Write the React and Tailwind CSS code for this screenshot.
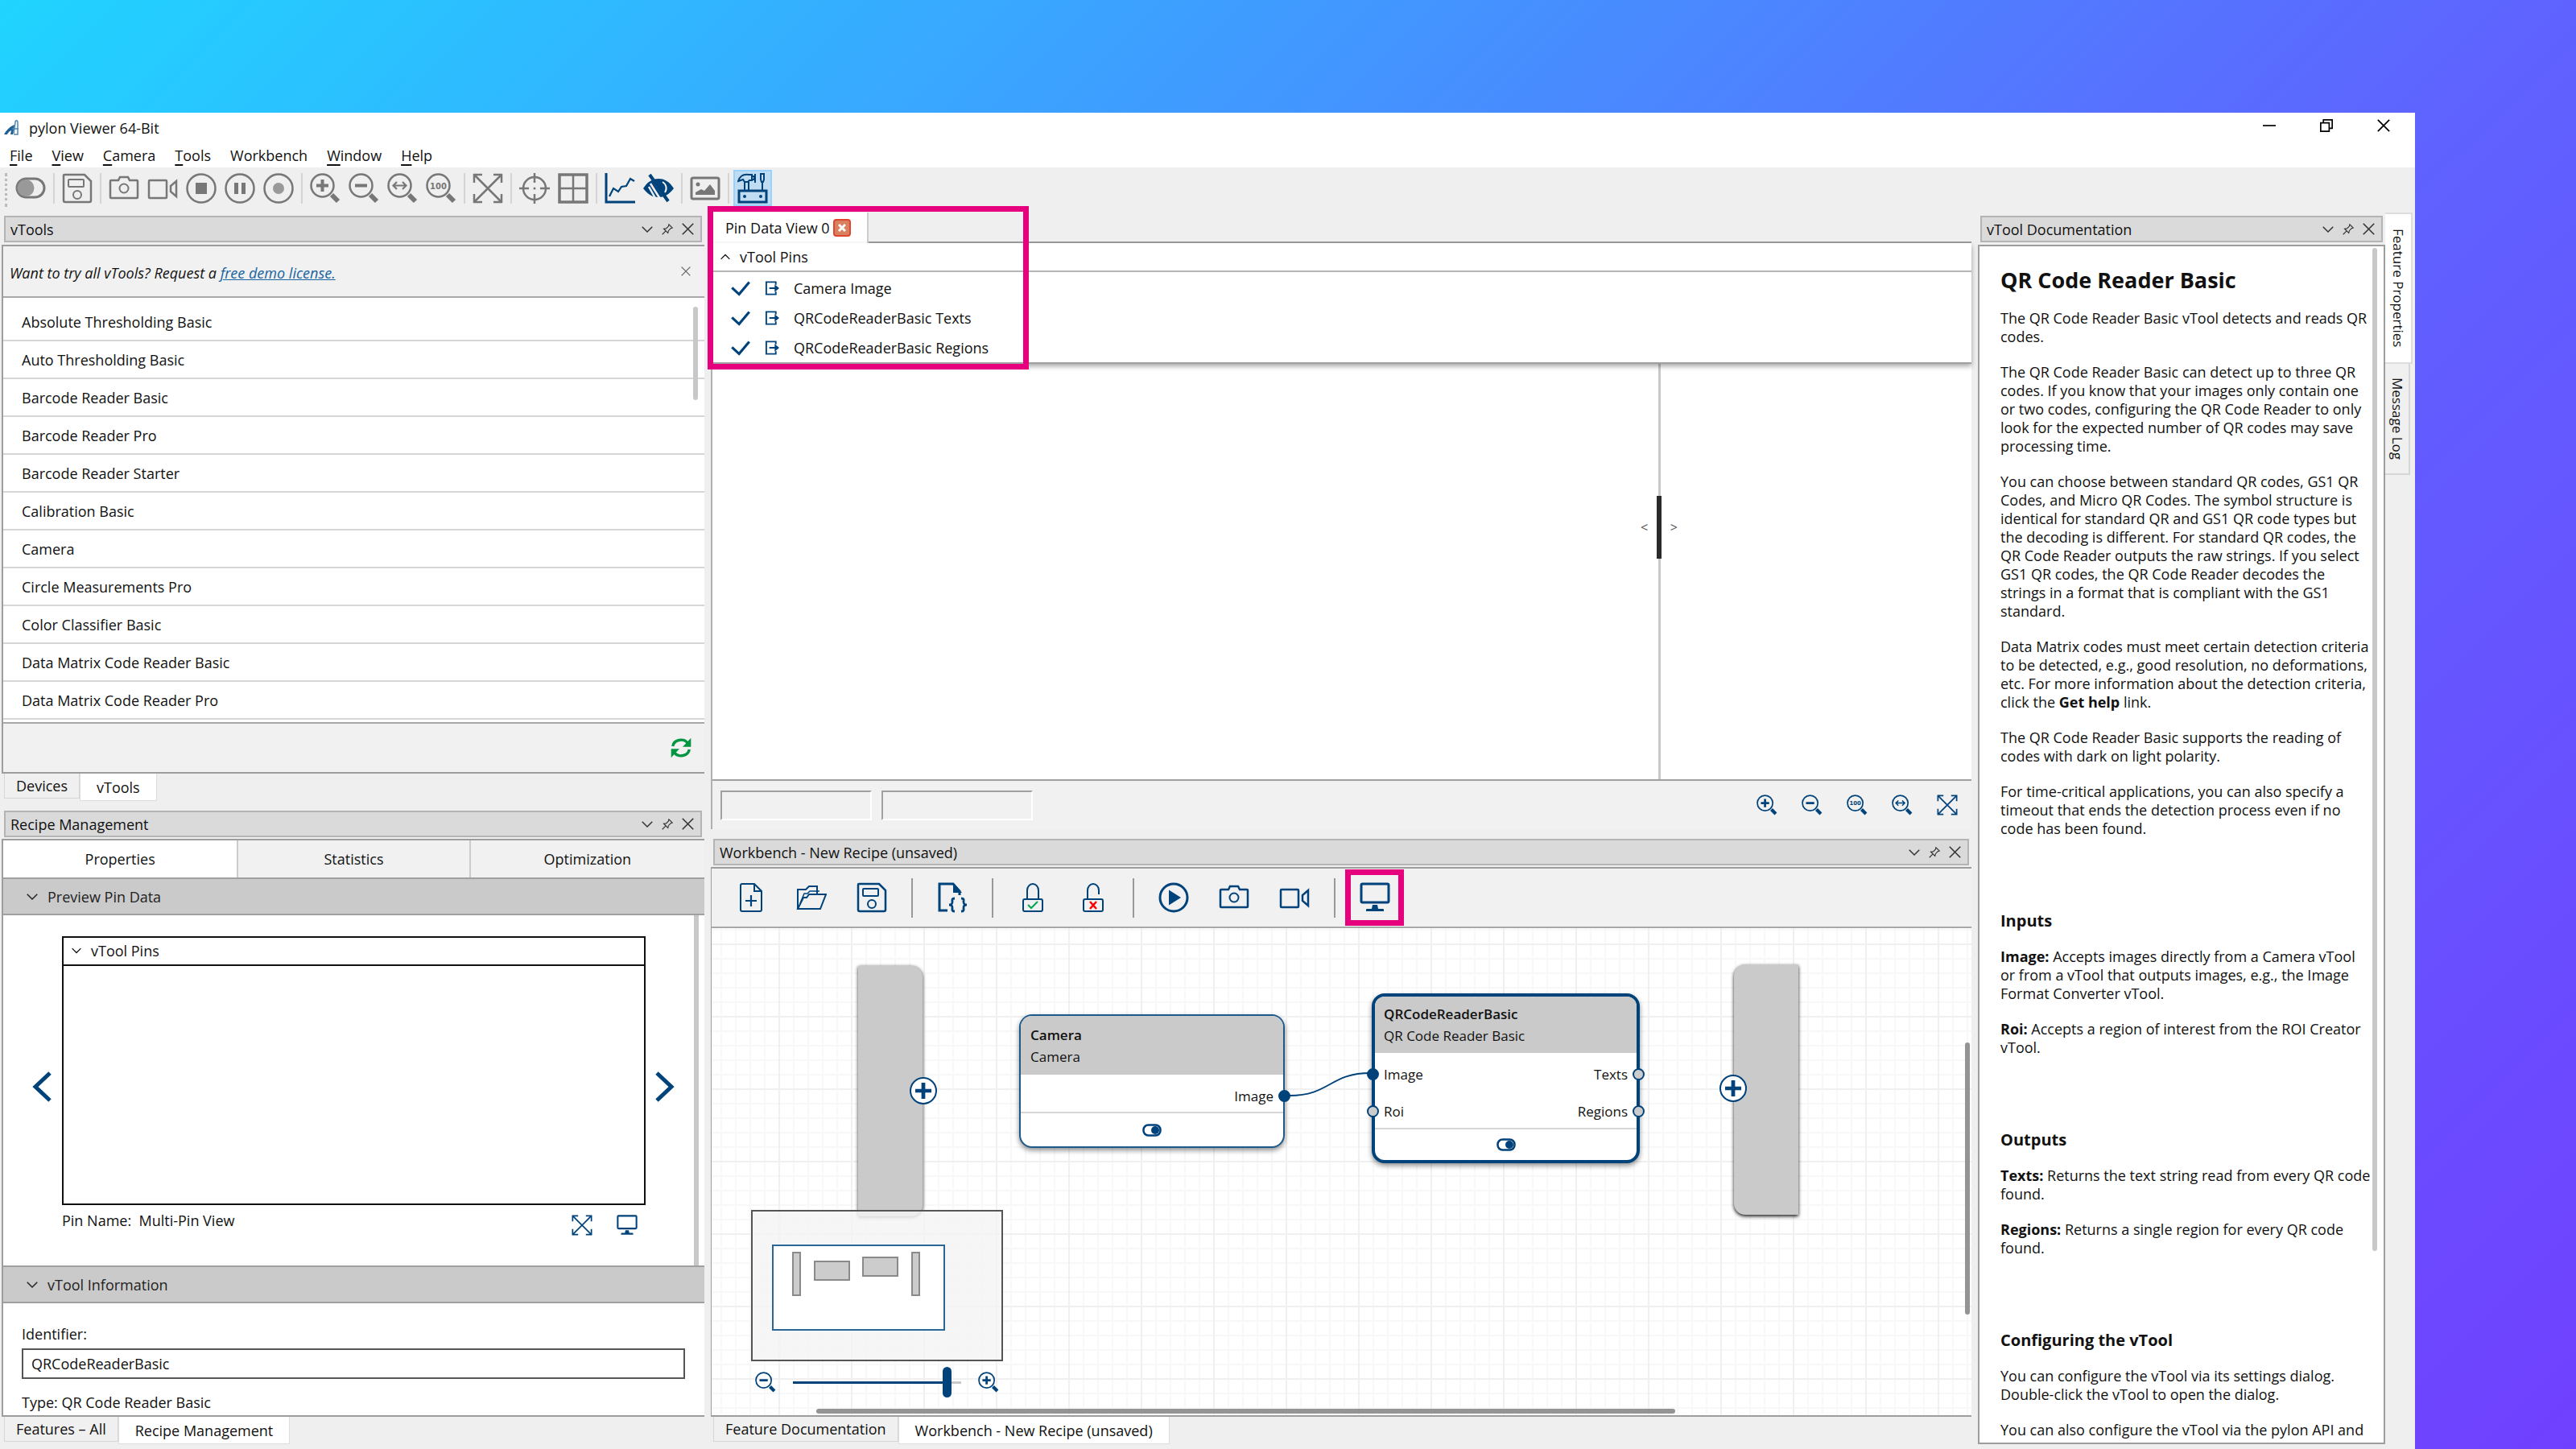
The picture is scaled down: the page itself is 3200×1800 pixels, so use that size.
import React, { useState } from "react";

const vtools = [
    "Absolute Thresholding Basic",
    "Auto Thresholding Basic",
    "Barcode Reader Basic",
    "Barcode Reader Pro",
    "Barcode Reader Starter",
    "Calibration Basic",
    "Camera",
    "Circle Measurements Pro",
    "Color Classifier Basic",
    "Data Matrix Code Reader Basic",
    "Data Matrix Code Reader Pro",
];

const menus = ["File", "View", "Camera", "Tools", "Workbench", "Window", "Help"];

const pins = [
    "Camera Image",
    "QRCodeReaderBasic Texts",
    "QRCodeReaderBasic Regions",
];

// All icons are drawn on a 38x38 grid and take the text colour
const Svg = ({ className = "size-[38px]", children }) => (
    <svg
        viewBox="0 0 38 38"
        className={"shrink-0 " + className}
        fill="none"
        stroke="currentColor"
        strokeWidth="2.5"
        aria-hidden="true"
    >
        {children}
    </svg>
);

const ToggleIcon = () => (
    <Svg>
        <rect x="2" y="7" width="34" height="23" rx="11.5" strokeWidth="3" />
        <circle cx="13" cy="18.5" r="10.5" fill="#999" stroke="none" />
    </Svg>
);

const SaveIcon = () => (
    <Svg>
        <path d="M3 2h25l8 8v24a2 2 0 0 1-2 2H4a2 2 0 0 1-2-2V3a1 1 0 0 1 1-1Z" />
        <rect x="8" y="8" width="19" height="9" rx="1" strokeWidth="2" />
        <circle cx="19" cy="27" r="5" strokeWidth="2" />
    </Svg>
);

const CameraIcon = () => (
    <Svg>
        <path d="M2 30V10a1 1 0 0 1 1-1h9l2-4h10l2 4h9a1 1 0 0 1 1 1v20a1 1 0 0 1-1 1H3a1 1 0 0 1-1-1Z" />
        <circle cx="19" cy="19" r="5.5" strokeWidth="2" />
    </Svg>
);

const VideoIcon = () => (
    <Svg>
        <rect x="2" y="9" width="22" height="22" rx="1" />
        <path d="M36 10v19l-7-6v-7Z" />
    </Svg>
);

const StopIcon = () => (
    <Svg>
        <circle cx="19" cy="19" r="17.5" />
        <rect x="12" y="12" width="14" height="14" fill="currentColor" stroke="none" />
    </Svg>
);

const PauseIcon = () => (
    <Svg>
        <circle cx="19" cy="19" r="17.5" />
        <path d="M12 12h5v14h-5zM21 12h5v14h-5z" fill="currentColor" stroke="none" />
    </Svg>
);

const RecordIcon = () => (
    <Svg>
        <circle cx="19" cy="19" r="17.5" />
        <circle cx="19" cy="19" r="7" fill="#999" stroke="none" />
    </Svg>
);

const PlayIcon = () => (
    <Svg>
        <circle cx="19" cy="19" r="17" strokeWidth="3" />
        <path d="M13 9.500v19l15-9.500Z" fill="currentColor" stroke="none" />
    </Svg>
);

const Magnifier = ({ className, children }) => (
    <Svg className={className}>
        <circle cx="15.500" cy="15.500" r="14" />
        <path d="M27 27l8 8" strokeWidth="6" />
        {children}
    </Svg>
);

const ZoomInIcon = ({ className }) => (
    <Magnifier className={className}>
        <path d="M15.500 8v15M8 15.500h15" strokeWidth="4" />
    </Magnifier>
);

const ZoomOutIcon = ({ className }) => (
    <Magnifier className={className}>
        <path d="M8 15.500h15" strokeWidth="4" />
    </Magnifier>
);

const ZoomFitIcon = ({ className }) => (
    <Magnifier className={className}>
        <path d="M8 15.500h15M12 11l-4.500 4.500 4.500 4.500M19 11l4.500 4.500-4.500 4.500" strokeWidth="2.200" />
    </Magnifier>
);

const Zoom100Icon = ({ className }) => (
    <Magnifier className={className}>
        <text
            x="15.500"
            y="19.500"
            textAnchor="middle"
            className="font-['DejaVu_Sans'] text-[10px] font-bold"
            fill="currentColor"
            stroke="none"
        >
            100
        </text>
    </Magnifier>
);

const ExpandIcon = ({ className }) => (
    <Svg className={className}>
        <path d="M2 2l34 34M36 2L2 36" />
        <path d="M12 2H2v10M26 2h10v10M2 26v10h10M36 26v10H26" />
    </Svg>
);

const CrosshairIcon = () => (
    <Svg>
        <circle cx="19" cy="19" r="14" />
        <path d="M19 0v12M19 26v12M0 19h12M26 19h12" />
        <circle cx="19" cy="19" r="1.500" fill="currentColor" stroke="none" />
    </Svg>
);

const GridIcon = () => (
    <Svg>
        <rect x="2" y="2" width="34" height="34" strokeWidth="3.500" />
        <path d="M19 2v34M2 19h34" />
    </Svg>
);

const ChartIcon = () => (
    <Svg>
        <path d="M2 0v36h36" strokeWidth="3" />
        <path d="M6 29l5-10 6 4 4-6 6-1 5-9 5 3" strokeWidth="2.200" />
    </Svg>
);

const EyeOffIcon = () => (
    <Svg>
        <path d="M0 19C6 10 12 7 19 7s13 3 19 12c-6 8-12 11-19 11S6 27 0 19Z" fill="currentColor" stroke="none" />
        <path d="M24 11a9 9 0 0 1 3 13" stroke="#efefef" strokeWidth="2" />
        <path d="M11 7l20 29M9 13l12 19M7 17l8 14" stroke="#efefef" strokeWidth="2.500" />
        <path d="M8 2l23 33" strokeWidth="4" />
    </Svg>
);

const ImageIcon = () => (
    <Svg>
        <rect x="2" y="6" width="34" height="26" rx="2" strokeWidth="3" />
        <circle cx="10" cy="14" r="2.500" fill="currentColor" stroke="none" />
        <path d="M7 27v-3l7-4 4 2 7-8 6 8v5Z" fill="currentColor" stroke="none" />
    </Svg>
);

const ToolboxIcon = () => (
    <Svg>
        <rect x="2" y="22" width="34" height="14" strokeWidth="3" />
        <circle cx="9" cy="29" r="2" fill="currentColor" stroke="none" />
        <circle cx="29" cy="29" r="2" fill="currentColor" stroke="none" />
        <path d="M1 10c2-6 6-9 13-8h4v7h-3l-2 2H9L7 8Z" strokeWidth="2" />
        <path d="M18 4h3v4h-3M22 1v11" strokeWidth="2" />
        <path d="M9 11v10M14 11v10M31 11v10" strokeWidth="2" />
        <path d="M29 1h4v7l-1 3h-2l-1-3Z" strokeWidth="2" />
    </Svg>
);

const NewFileIcon = () => (
    <Svg>
        <path d="M6 4a2 2 0 0 1 2-2h15l9 9v23a2 2 0 0 1-2 2H8a2 2 0 0 1-2-2ZM23 2v9h9" strokeWidth="2" />
        <path d="M19 16v14M12 23h14" strokeWidth="2.200" />
    </Svg>
);

const OpenIcon = () => (
    <Svg>
        <path d="M2 33V9h10l4-4h10v9M2 33l7-14h4l3-4h21l-7 18Z" strokeWidth="2" />
        <path d="M5 26l5-12h4l3-3h12" strokeWidth="1.500" />
    </Svg>
);

const ScriptIcon = () => (
    <Svg>
        <path d="M13 35H3V2h17l8 9v5" strokeWidth="3" />
        <path d="M20 1v12h11Z" fill="currentColor" stroke="none" />
        <path d="M22 20c-4 0-3 2-3 4s0 4-4 4c4 0 4 2 4 4s-1 4 3 4M30 20c4 0 3 2 3 4s0 4 4 4c-4 0-4 2-4 4s1 4-3 4" strokeWidth="2.800" />
    </Svg>
);

const LockIcon = () => (
    <Svg>
        <path d="M12 20V10a7 8 0 0 1 14 0v10" strokeWidth="2" />
        <rect x="7" y="21" width="24" height="15" rx="2" strokeWidth="2" />
        <path d="M13 28l4 4 8-8" stroke="#00a651" strokeWidth="2" />
    </Svg>
);

const UnlockIcon = () => (
    <Svg>
        <path d="M12 20V10a7 8 0 0 1 14 0v5" strokeWidth="2" />
        <rect x="7" y="21" width="24" height="15" rx="2" strokeWidth="2" />
        <path d="M15 24l8 9M23 24l-8 9" stroke="#f00" strokeWidth="2.500" />
    </Svg>
);

const MonitorIcon = ({ className }) => (
    <Svg className={className}>
        <rect x="2" y="2" width="34" height="23" rx="1.500" strokeWidth="3" />
        <path d="M16 28h6l1 5h6a1 1 0 0 1 1 1v2H8v-2a1 1 0 0 1 1-1h6Z" fill="currentColor" stroke="none" />
    </Svg>
);

const RefreshIcon = () => (
    <Svg className="size-[26px]">
        <path d="M4 16A15 13 0 0 1 31 10M34 22A15 13 0 0 1 7 28" strokeWidth="5" />
        <path d="M37 1v16H22Z M1 37V21h15Z" fill="currentColor" stroke="none" />
    </Svg>
);

const CloseIcon = ({ className = "size-[14px]" }) => (
    <Svg className={className}>
        <path d="M2 2l34 34M36 2L2 36" strokeWidth="4" />
    </Svg>
);

const Chevron = ({ className = "size-[14px]" }) => (
    <Svg className={className}>
        <path d="M2 10l17 17 17-17" strokeWidth="4" />
    </Svg>
);

const PinIcon = () => (
    <Svg className="size-[14px]">
        <path d="M2 36l11-11M7 17l14 14 2-8 8-8 5-1L24 2l-1 6-8 8Z" strokeWidth="3" />
    </Svg>
);

const MiniToggle = () => (
    <svg viewBox="0 0 24 16" className="w-6 h-4" fill="none" aria-hidden="true">
        <rect x="1.500" y="1.500" width="21" height="13" rx="6" stroke="#00427a" strokeWidth="2.500" />
        <circle cx="16" cy="8" r="5" fill="#00427a" />
    </svg>
);

const DockHeader = ({ title }) => (
    <div className="mx-[3px] flex h-[33px] shrink-0 items-center justify-between border-2 border-[#b4b4b4] bg-[#dadada] pl-[6px] pr-2">
        <h2>{title}</h2>
        <div className="flex items-center gap-[11px] text-[#333]">
            <button aria-label="Options"><Chevron /></button>
            <button aria-label="Auto hide"><PinIcon /></button>
            <button aria-label="Close"><CloseIcon className="size-[15px]" /></button>
        </div>
    </div>
);

const DockTab = ({ active, children }) => (
    <button
        className={
            active
                ? "h-[34px] border-x border-b border-[#ddd] bg-white px-5"
                : "h-[31px] border-x border-b border-[#d6d6d6] bg-[#f0f0f0] px-[14px]"
        }
    >
        {children}
    </button>
);

const ToolSep = () => <span className="-mx-px h-[38px] w-[2px] bg-[#d4d4d4]" />;

const ToolButton = ({ label, children }) => (
    <button aria-label={label}>{children}</button>
);

const MainToolbar = () => (
    <div className="flex h-[52px] shrink-0 items-start gap-[10px] pl-[6px] pt-[7px] text-[#777]">
        <span className="h-[42px] border-l-[3px] border-dotted border-[#bbb]" />
        <ToolButton label="Connect"><ToggleIcon /></ToolButton>
        <ToolSep />
        <ToolButton label="Save"><SaveIcon /></ToolButton>
        <ToolSep />
        <ToolButton label="Single shot"><CameraIcon /></ToolButton>
        <ToolButton label="Continuous shot"><VideoIcon /></ToolButton>
        <ToolButton label="Stop"><StopIcon /></ToolButton>
        <ToolButton label="Pause"><PauseIcon /></ToolButton>
        <ToolButton label="Record"><RecordIcon /></ToolButton>
        <ToolSep />
        <ToolButton label="Zoom in"><ZoomInIcon /></ToolButton>
        <ToolButton label="Zoom out"><ZoomOutIcon /></ToolButton>
        <ToolButton label="Zoom to fit"><ZoomFitIcon /></ToolButton>
        <ToolButton label="Zoom 100%"><Zoom100Icon /></ToolButton>
        <ToolSep />
        <ToolButton label="Full screen"><ExpandIcon /></ToolButton>
        <ToolSep />
        <ToolButton label="Crosshair"><CrosshairIcon /></ToolButton>
        <ToolButton label="Grid"><GridIcon /></ToolButton>
        <ToolSep />
        <span className="flex gap-[10px] text-[#00427a]">
            <ToolButton label="Statistics"><ChartIcon /></ToolButton>
            <ToolButton label="Hide overlay"><EyeOffIcon /></ToolButton>
        </span>
        <ToolSep />
        <ToolButton label="Image"><ImageIcon /></ToolButton>
        <ToolSep />
        <button
            aria-label="Workbench"
            className="-mx-1 -mt-1 flex h-[45px] w-12 items-center justify-center border-2 border-[#99d1ff] bg-[#c0dcf3] text-[#00427a]"
        >
            <ToolboxIcon />
        </button>
    </div>
);

const VToolsPanel = () => (
    <>
        <DockHeader title="vTools" />
        <div className="mt-[3px] flex h-[657px] shrink-0 flex-col border-y-2 border-l-2 border-[#9d9d9d]">
            <div className="flex h-[64px] shrink-0 items-center justify-between border-b-2 border-[#a8a8a8] bg-[#f1f1f1] pl-2 pr-[17px]">
                <p className="pt-[3px] italic">
                    Want to try all vTools? Request a{" "}
                    <a href="#license" className="text-[#1763a0] underline">
                        free demo license.
                    </a>
                </p>
                <button aria-label="Dismiss" className="text-[#666]">
                    <CloseIcon className="size-3" />
                </button>
            </div>
            <div className="relative min-h-0 flex-1 overflow-hidden bg-white pt-[7px]">
                <ul>
                    {vtools.map((tool) => (
                        <li
                            key={tool}
                            className="flex h-[47px] items-center border-b-2 border-[#d6d6d6] pl-[23px]"
                        >
                            {tool}
                        </li>
                    ))}
                </ul>
                <span className="absolute right-[8px] top-[11px] h-[116px] w-[6px] rounded-full bg-[#c8c8c8]" />
            </div>
            <div className="flex h-[62px] shrink-0 items-center justify-end border-t-2 border-[#a8a8a8] bg-[#f1f1f1] pr-4 text-[#009640]">
                <button aria-label="Refresh"><RefreshIcon /></button>
            </div>
        </div>
        <div className="ml-[3px] flex items-start">
            <DockTab>Devices</DockTab>
            <DockTab active>vTools</DockTab>
        </div>
    </>
);

const SectionHeader = ({ title }) => (
    <button className="flex h-[47px] w-full shrink-0 items-center gap-3 border-y-2 border-[#a0a0a0] bg-[#cacaca] pl-[29px] text-[#222]">
        <Chevron />
        {title}
    </button>
);

const RecipePanel = () => {
    const [identifier, setIdentifier] = useState("QRCodeReaderBasic");

    return (
        <>
            <DockHeader title="Recipe Management" />
            <div className="mt-[2px] flex min-h-0 flex-1 flex-col overflow-hidden border-y-2 border-l-2 border-[#9d9d9d] bg-white">
                <div className="grid h-[46px] shrink-0 grid-cols-3">
                    <button>Properties</button>
                    <button className="border-x-2 border-[#ccc] bg-[#f1f1f1]">Statistics</button>
                    <button className="bg-[#f1f1f1]">Optimization</button>
                </div>
                <SectionHeader title="Preview Pin Data" />
                <div className="flex h-[435px] shrink-0">
                    <div className="flex flex-1 items-center justify-between pl-9 pr-6">
                        <button aria-label="Previous pin" className="mb-[10px] text-[#00427a]">
                            <svg viewBox="0 0 24 38" className="h-[38px] w-6" fill="none" stroke="currentColor" strokeWidth="5">
                                <path d="M22 2L4 19l18 17" />
                            </svg>
                        </button>
                        <div className="ml-[13px] mr-3 flex-1 pt-4">
                            <div className="flex h-[334px] flex-col border-2 border-[#111]">
                                <div className="flex h-[35px] items-center gap-3 border-b-2 border-[#111] pl-[10px]">
                                    <Chevron className="size-3" />
                                    vTool Pins
                                </div>
                            </div>
                            <div className="flex h-[66px] justify-between pr-[10px]">
                                <p className="pt-[7px] whitespace-pre">Pin Name:  Multi-Pin View</p>
                                <div className="flex items-start gap-[30px] pt-3 text-[#00427a]">
                                    <button aria-label="Full screen"><ExpandIcon className="size-[26px]" /></button>
                                    <button aria-label="Open pin data view"><MonitorIcon className="size-[26px]" /></button>
                                </div>
                            </div>
                        </div>
                        <button aria-label="Next pin" className="mb-[10px] text-[#00427a]">
                            <svg viewBox="0 0 24 38" className="h-[38px] w-6" fill="none" stroke="currentColor" strokeWidth="5">
                                <path d="M2 2l18 17L2 36" />
                            </svg>
                        </button>
                    </div>
                    <span className="mr-[7px] w-[6px] bg-[#c8c8c8]" />
                </div>
                <SectionHeader title="vTool Information" />
                <div className="flex flex-col pl-[23px] pr-6 pt-[26px]">
                    <label htmlFor="identifier">Identifier:</label>
                    <input
                        id="identifier"
                        className="mt-[6px] h-[38px] border-2 border-[#555] bg-white px-[10px] outline-none"
                        value={identifier}
                        onChange={(e) => setIdentifier(e.target.value)}
                    />
                    <p className="mt-[17px]">Type: QR Code Reader Basic</p>
                </div>
            </div>
            <div className="mb-[5px] ml-[3px] flex h-[35px] shrink-0 items-start">
                <DockTab>Features – All</DockTab>
                <DockTab active>Recipe Management</DockTab>
            </div>
        </>
    );
};

const PinDataView = () => {
    const [checked, setChecked] = useState(pins);

    const toggle = (pin) =>
        setChecked(
            checked.includes(pin)
                ? checked.filter((p) => p !== pin)
                : [...checked, pin]
        );

    return (
        <div className="relative flex h-[770px] shrink-0 flex-col">
            <div className="flex h-[42px] items-end border-b-2 border-[#9d9d9d]">
                <div className="mb-[-2px] flex h-[38px] items-center gap-1 border-r-2 border-[#ccc] bg-white pl-[18px] pr-5">
                    <span>Pin Data View 0</span>
                    <button
                        aria-label="Close tab"
                        className="flex size-[22px] items-center justify-center rounded-[4px] border-2 border-[#e0452f] bg-[#d9805f] text-white"
                    >
                        <Svg className="size-[10px]">
                            <path d="M4 4l30 30M34 4L4 34" strokeWidth="11" />
                        </Svg>
                    </button>
                </div>
            </div>
            <div className="flex min-h-0 flex-1 flex-col border-l-2 border-[#b0b0b0] bg-white">
                <div className="z-10 shadow-[0_3px_6px_rgba(0,0,0,0.35)]">
                    <button className="flex h-9 w-full items-center gap-3 border-b-2 border-[#b4b4b4] bg-white pl-[10px]">
                        <Chevron className="size-3 rotate-180" />
                        vTool Pins
                    </button>
                    <ul className="border-b-2 border-[#a0a0a0] bg-white pt-px">
                        {pins.map((pin) => (
                            <li key={pin}>
                                <label className="flex h-[37px] items-center pl-[23px]">
                                    <input
                                        type="checkbox"
                                        className="sr-only"
                                        checked={checked.includes(pin)}
                                        onChange={() => toggle(pin)}
                                    />
                                    <Svg className="size-6 text-[#00427a]">
                                        {checked.includes(pin) && (
                                            <path d="M2 18l14 13L36 7" strokeWidth="5" />
                                        )}
                                    </Svg>
                                    <Svg className="ml-[18px] mr-[18px] size-[18px] text-[#00427a]">
                                        <path d="M29 10V3H4v32h25v-7M12 19h16" strokeWidth="4" />
                                        <path d="M26 9l12 10-12 10Z" fill="currentColor" stroke="none" />
                                    </Svg>
                                    {pin}
                                </label>
                            </li>
                        ))}
                    </ul>
                </div>
                <div className="flex min-h-0 flex-1">
                    <div className="flex-1" />
                    <div className="flex w-[50px]">
                        <span className="w-[22px] pl-[2px] pt-[191px] text-[16px] text-[#555]">&lt;</span>
                        <div className="flex w-[6px] flex-col items-center">
                            <span className="h-[164px] w-[3px] bg-[#c8c8c8]" />
                            <span className="h-[78px] w-[6px] bg-[#2a2a2a]" />
                            <span className="w-[3px] flex-1 bg-[#c8c8c8]" />
                        </div>
                        <span className="w-[22px] pr-[2px] pt-[191px] text-right text-[16px] text-[#555]">&gt;</span>
                    </div>
                    <div className="w-[363px]" />
                </div>
                <div className="flex h-[62px] shrink-0 items-center justify-between border-t-2 border-[#a0a0a0] bg-[#f1f1f1] pl-[10px] pr-[17px]">
                    <div className="flex gap-3">
                        <input readOnly aria-label="Position" className="h-[37px] w-[188px] border-2 border-b-white border-l-[#a0a0a0] border-r-white border-t-[#a0a0a0]" />
                        <input readOnly aria-label="Value" className="h-[37px] w-[188px] border-2 border-b-white border-l-[#a0a0a0] border-r-white border-t-[#a0a0a0]" />
                    </div>
                    <div className="flex gap-[30px] text-[#00427a]">
                        <button aria-label="Zoom in"><ZoomInIcon className="size-[26px]" /></button>
                        <button aria-label="Zoom out"><ZoomOutIcon className="size-[26px]" /></button>
                        <button aria-label="Zoom 100%"><Zoom100Icon className="size-[26px]" /></button>
                        <button aria-label="Zoom to fit"><ZoomFitIcon className="size-[26px]" /></button>
                        <button aria-label="Full screen"><ExpandIcon className="size-[26px]" /></button>
                    </div>
                </div>
            </div>
            {/* Highlight frame */}
            <div className="pointer-events-none absolute -left-1 -top-1 z-20 h-[203px] w-[399px] border-[7px] border-[#e6007e]" />
        </div>
    );
};

const WorkSep = () => <span className="h-[49px] w-[2px] bg-[#999]" />;

const WorkbenchToolbar = () => (
    <div className="flex h-[74px] shrink-0 items-center gap-[36px] border-b-2 border-[#a8a8a8] bg-[#f1f1f1] pl-[30px] text-[#00427a]">
        <div className="flex gap-[37px]">
            <ToolButton label="New recipe"><NewFileIcon /></ToolButton>
            <ToolButton label="Open recipe"><OpenIcon /></ToolButton>
            <ToolButton label="Save recipe"><SaveIcon /></ToolButton>
        </div>
        <div className="-ml-[6px] flex items-center gap-[30px]">
            <WorkSep />
            <ToolButton label="Generate code"><ScriptIcon /></ToolButton>
            <WorkSep />
            <div className="flex gap-[37px]">
                <ToolButton label="Lock"><LockIcon /></ToolButton>
                <ToolButton label="Unlock"><UnlockIcon /></ToolButton>
            </div>
            <WorkSep />
            <div className="flex gap-[37px]">
                <ToolButton label="Run"><PlayIcon /></ToolButton>
                <ToolButton label="Single run"><CameraIcon /></ToolButton>
                <ToolButton label="Continuous run"><VideoIcon /></ToolButton>
            </div>
            <WorkSep />
            <button
                aria-label="Pin data view"
                className="-ml-[18px] flex h-[70px] w-[73px] items-center justify-center border-[7px] border-[#e6007e]"
            >
                <MonitorIcon />
            </button>
        </div>
    </div>
);

const Port = ({ filled, className }) => (
    <span
        className={
            "absolute size-[15px] rounded-full border-2 border-[#00427a] " +
            (filled ? "bg-[#00427a] " : "bg-[#ccc] ") +
            className
        }
    />
);

const PlusBadge = ({ className }) => (
    <button
        aria-label="Add pin"
        className={
            "absolute flex size-[34px] items-center justify-center rounded-full border-2 border-[#00427a] bg-white text-[#00427a] " +
            className
        }
    >
        <Svg className="size-5">
            <path d="M19 0v38M0 19h38" strokeWidth="9" />
        </Svg>
    </button>
);

const Canvas = () => (
    <div className="relative min-h-0 flex-1 overflow-hidden bg-white bg-[linear-gradient(to_right,#f0f0f0_2px,transparent_2px),linear-gradient(#f0f0f0_2px,transparent_2px),linear-gradient(to_right,#f8f8f8_2px,transparent_2px),linear-gradient(#f8f8f8_2px,transparent_2px)] bg-[size:90px_90px,90px_90px,18px_18px,18px_18px] bg-[position:83px_19px] text-[17px]">
        {/* Recipe input and output bars */}
        <div className="absolute left-[182px] top-[47px] h-[311px] w-[80px] rounded-r-[14px] bg-[#cacaca] shadow-[0_1px_4px_rgba(0,0,0,0.8)]" />
        <PlusBadge className="left-[246px] top-[185px]" />
        <div className="absolute left-[1270px] top-[45px] h-[311px] w-[80px] rounded-l-[14px] bg-[#cacaca] shadow-[0_2px_4px_rgba(0,0,0,0.9)]" />
        <PlusBadge className="left-[1252px] top-[182px]" />

        {/* Connection */}
        <svg className="absolute left-[712px] top-[170px] h-[50px] w-[110px]" fill="none" aria-hidden="true">
            <path d="M6 38C56 38 56 10 106 10" stroke="#00427a" strokeWidth="2" />
        </svg>

        {/* Camera */}
        <div className="absolute left-[382px] top-[107px] h-[166px] w-[330px]">
            <div className="flex h-full flex-col overflow-hidden rounded-2xl border-2 border-[#1d5a8c] bg-white shadow-[0_3px_6px_rgba(0,0,0,0.45)]">
                <div className="h-[73px] bg-[#cacaca] px-3 pt-[10px] leading-[27px]">
                    <p className="font-semibold">Camera</p>
                    <p>Camera</p>
                </div>
                <div className="flex h-[48px] items-center justify-end border-b-2 border-[#d6d6d6] pr-3 pt-2">
                    <span>Image</span>
                </div>
                <button aria-label="Camera settings" className="flex flex-1 items-center justify-center">
                    <MiniToggle />
                </button>
            </div>
            <Port filled className="-right-[7px] top-[94px]" />
        </div>

        {/* QR code reader */}
        <div className="absolute left-[820px] top-[81px] h-[211px] w-[333px]">
            <div className="flex h-full flex-col overflow-hidden rounded-2xl border-4 border-[#00427a] bg-white shadow-[0_3px_6px_rgba(0,0,0,0.45)]">
                <div className="h-[70px] bg-[#cacaca] px-[11px] pt-2 leading-[27px]">
                    <p className="font-semibold">QRCodeReaderBasic</p>
                    <p>QR Code Reader Basic</p>
                </div>
                <div className="flex h-[95px] flex-col justify-between border-b-2 border-[#d6d6d6] px-[11px] pb-2 pt-[15px]">
                    <div className="flex justify-between">
                        <span>Image</span>
                        <span>Texts</span>
                    </div>
                    <div className="flex justify-between">
                        <span>Roi</span>
                        <span>Regions</span>
                    </div>
                </div>
                <button aria-label="Reader settings" className="flex flex-1 items-center justify-center">
                    <MiniToggle />
                </button>
            </div>
            <Port filled className="-left-[6px] top-[93px]" />
            <Port className="-left-[6px] top-[139px]" />
            <Port className="-right-[6px] top-[93px]" />
            <Port className="-right-[6px] top-[139px]" />
        </div>

        {/* Overview map */}
        <div className="absolute left-[49px] top-[350px] h-[188px] w-[313px] border-2 border-[#555] bg-[#f4f4f4]/80">
            <div className="absolute left-[24px] top-[41px] h-[107px] w-[215px] border-2 border-[#2b6796] bg-white">
                <span className="absolute left-[23px] top-[7px] h-[55px] w-[11px] border-2 border-[#8a8a8a] bg-[#ccc]" />
                <span className="absolute left-[50px] top-[18px] h-[25px] w-[45px] border-2 border-[#8a8a8a] bg-[#ccc]" />
                <span className="absolute left-[110px] top-[13px] h-[25px] w-[45px] border-2 border-[#8a8a8a] bg-[#ccc]" />
                <span className="absolute left-[171px] top-[7px] h-[55px] w-[11px] border-2 border-[#8a8a8a] bg-[#ccc]" />
            </div>
        </div>
        <div className="absolute left-[54px] top-[545px] flex h-[38px] items-center text-[#00427a]">
            <button aria-label="Zoom out"><ZoomOutIcon className="size-[26px]" /></button>
            <input
                type="range"
                aria-label="Zoom"
                min="0"
                max="100"
                defaultValue="94"
                className="mx-[21px] h-[3px] w-[209px] appearance-none bg-[linear-gradient(to_right,#00427a_93%,#c8c8c8_93%)] [&::-webkit-slider-thumb]:h-[38px] [&::-webkit-slider-thumb]:w-[11px] [&::-webkit-slider-thumb]:appearance-none [&::-webkit-slider-thumb]:rounded-full [&::-webkit-slider-thumb]:bg-[#00427a]"
            />
            <button aria-label="Zoom in"><ZoomInIcon className="size-[26px]" /></button>
        </div>

        {/* Scroll bars */}
        <span className="absolute bottom-[2px] left-[130px] h-[6px] w-[1067px] rounded-full bg-[#949494]" />
        <span className="absolute right-[2px] top-[142px] h-[338px] w-[6px] rounded-full bg-[#949494]" />
    </div>
);

const DocText = ({ children }) => <p className="mb-[21px]">{children}</p>;

const Documentation = () => (
    <div className="flex min-h-0 flex-col pt-2">
        <DockHeader title="vTool Documentation" />
        <div className="relative mb-[6px] mt-[3px] min-h-0 flex-1 overflow-hidden border-2 border-[#9d9d9d] bg-white pl-[26px] pr-4 leading-[23px]">
            <h1 className="mb-[18px] mt-6 text-[27px] font-bold leading-9">QR Code Reader Basic</h1>
            <DocText>The QR Code Reader Basic vTool detects and reads QR codes.</DocText>
            <DocText>
                The QR Code Reader Basic can detect up to three QR codes. If you
                know that your images only contain one or two codes, configuring
                the QR Code Reader to only look for the expected number of QR
                codes may save processing time.
            </DocText>
            <DocText>
                You can choose between standard QR codes, GS1 QR Codes, and
                Micro QR Codes. The symbol structure is identical for standard
                QR and GS1 QR code types but the decoding is different. For
                standard QR codes, the QR Code Reader outputs the raw strings.
                If you select GS1 QR codes, the QR Code Reader decodes the
                strings in a format that is compliant with the GS1 standard.
            </DocText>
            <DocText>
                Data Matrix codes must meet certain detection criteria to be
                detected, e.g., good resolution, no deformations, etc. For more
                information about the detection criteria, click the{" "}
                <b>Get help</b> link.
            </DocText>
            <DocText>
                The QR Code Reader Basic supports the reading of codes with dark
                on light polarity.
            </DocText>
            <DocText>
                For time-critical applications, you can also specify a timeout
                that ends the detection process even if no code has been found.
            </DocText>
            <h2 className="mb-[18px] mt-[88px] text-[20px] font-bold leading-[30px]">Inputs</h2>
            <DocText>
                <b>Image:</b> Accepts images directly from a Camera vTool or
                from a vTool that outputs images, e.g., the Image Format
                Converter vTool.
            </DocText>
            <DocText>
                <b>Roi:</b> Accepts a region of interest from the ROI Creator
                vTool.
            </DocText>
            <h2 className="mb-[18px] mt-[88px] text-[20px] font-bold leading-[30px]">Outputs</h2>
            <DocText>
                <b>Texts:</b> Returns the text string read from every QR code
                found.
            </DocText>
            <DocText>
                <b>Regions:</b> Returns a single region for every QR code found.
            </DocText>
            <h2 className="mb-[18px] mt-[88px] text-[20px] font-bold leading-[30px]">Configuring the vTool</h2>
            <DocText>
                You can configure the vTool via its settings dialog.
                Double-click the vTool to open the dialog.
            </DocText>
            <p>You can also configure the vTool via the pylon API and</p>
            <span className="absolute right-[8px] top-[2px] h-[1246px] w-[6px] rounded-full bg-[#c8c8c8]" />
        </div>
    </div>
);

const App = () => {
    return (
        <div className="h-screen overflow-hidden bg-[linear-gradient(135deg,#20d4ff_0%,#5f62ff_64%,#7040ff_100%)] pr-[200px] pt-[140px] font-['Open_Sans','Noto_Sans',sans-serif] text-[18px] leading-6 text-[#111]">
            <div className="flex h-full flex-col bg-[#efefef]">
                {/* Title bar */}
                <div className="flex h-[38px] shrink-0 items-center justify-between bg-white pl-1">
                    <div className="flex items-center gap-3">
                        <svg viewBox="0 0 20 20" className="size-5" fill="none" aria-hidden="true">
                            <path d="M1 18C5 11 9 8 14 6l-2 12H9l1-5c-3 1-4 3-5 5Z" fill="#1f5f95" />
                            <path d="M13 17l2-14c0-3 3-3 3 0v15h-5M11 11h8" stroke="#4d86b3" strokeWidth="1.500" />
                        </svg>
                        <span>pylon Viewer 64-Bit</span>
                    </div>
                    <div className="flex items-center gap-[55px] pb-[6px] pr-[31px] text-black">
                        <button aria-label="Minimize">
                            <Svg className="size-4">
                                <path d="M0 19h38" strokeWidth="4" />
                            </Svg>
                        </button>
                        <button aria-label="Restore">
                            <Svg className="size-4">
                                <path d="M2 11h25v25H2ZM10 11V2h26v25h-9" strokeWidth="4" />
                            </Svg>
                        </button>
                        <button aria-label="Close window"><CloseIcon className="size-4" /></button>
                    </div>
                </div>
                <div className="flex h-[30px] shrink-0 items-center gap-6 bg-white pl-3">
                    {menus.map((menu) => (
                        <button key={menu}>
                            {menu === "Workbench" ? (
                                menu
                            ) : (
                                <>
                                    <span className="underline decoration-2 underline-offset-4">{menu[0]}</span>
                                    {menu.slice(1)}
                                </>
                            )}
                        </button>
                    ))}
                </div>
                <MainToolbar />

                <div className="grid min-h-0 flex-1 grid-cols-[875px_minmax(0,1fr)_506px_37px] grid-rows-[minmax(0,1fr)]">
                    <div className="ml-[2px] flex min-h-0 flex-col pt-2">
                        <VToolsPanel />
                        <div className="mt-3 flex min-h-0 flex-1 flex-col">
                            <RecipePanel />
                        </div>
                    </div>

                    <div className="mx-2 flex min-h-0 flex-col">
                        <PinDataView />
                        <div className="mt-3 flex min-h-0 flex-1 flex-col">
                            <DockHeader title="Workbench - New Recipe (unsaved)" />
                            <div className="mt-[2px] flex min-h-0 flex-1 flex-col border-y-2 border-l border-[#9d9d9d]">
                                <WorkbenchToolbar />
                                <Canvas />
                            </div>
                            <div className="mb-[5px] ml-[3px] flex h-[35px] shrink-0 items-start">
                                <DockTab>Feature Documentation</DockTab>
                                <DockTab active>Workbench - New Recipe (unsaved)</DockTab>
                            </div>
                        </div>
                    </div>

                    <Documentation />

                    <div className="flex flex-col items-start pt-1 text-[17px]">
                        <button className="h-[188px] w-[34px] border-2 border-l-0 border-[#ddd] bg-white [writing-mode:vertical-rl]">
                            Feature Properties
                        </button>
                        <button className="h-[138px] w-[31px] border-2 border-l-0 border-t-0 border-[#d6d6d6] bg-[#f0f0f0] [writing-mode:vertical-rl]">
                            Message Log
                        </button>
                    </div>
                </div>
            </div>
        </div>
    );
};

export default App;
